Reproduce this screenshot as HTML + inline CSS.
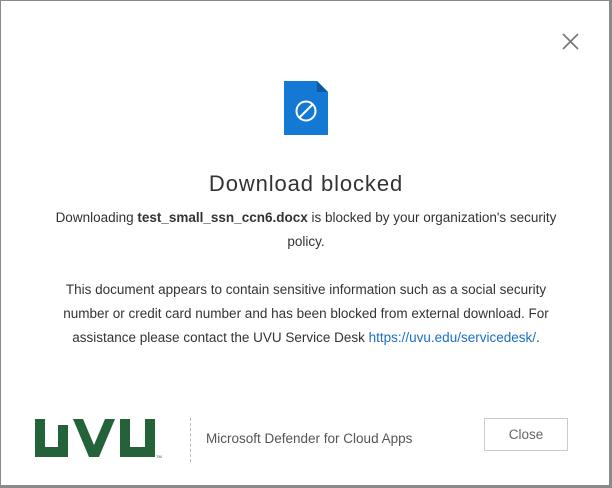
<!DOCTYPE html>
<html><head><style>
html,body{margin:0;padding:0;background:#fff;}
body{width:612px;height:488px;position:relative;overflow:hidden;font-family:"Liberation Sans",sans-serif;color:#333;}
.frame{position:absolute;left:0;top:0;width:608px;height:484px;border:2px solid #8a8a8a;border-left-width:1px;border-top-width:1px;border-right-width:3px;border-bottom-width:3px;}
.line{position:absolute;left:0;width:612px;text-align:center;white-space:nowrap;font-size:13.5px;}
a{color:#1a6fc9;text-decoration:none;}
</style></head><body>
<div class="frame"></div>
<svg style="position:absolute;left:562px;top:33px" width="17" height="17" viewBox="0 0 17 17"><path d="M1 1L16 16M16 1L1 16" stroke="#777" stroke-width="1.6"/></svg>
<svg style="position:absolute;left:284px;top:81px" width="44" height="54" viewBox="0 0 44 54">
<path d="M0 0H33L44 11V54H0Z" fill="#1479d4"/>
<path d="M33 0L44 11H33Z" fill="#0b5aa3"/>
<circle cx="22" cy="30" r="9.5" fill="none" stroke="#fff" stroke-width="2"/>
<path d="M15.5 36.5L28.5 23.5" stroke="#fff" stroke-width="2"/>
</svg>
<div class="line" style="top:171px;font-size:22px;letter-spacing:0.9px;">Download blocked</div>
<div class="line" style="top:210px;">Downloading <b>test_small_ssn_ccn6.docx</b> is blocked by your organization's security</div>
<div class="line" style="top:234px;">policy.</div>
<div class="line" style="top:282px;">This document appears to contain sensitive information such as a social security</div>
<div class="line" style="top:306px;">number or credit card number and has been blocked from external download. For</div>
<div class="line" style="top:330px;">assistance please contact the UVU Service Desk <a>https://uvu.edu/servicedesk/</a>.</div>
<svg style="position:absolute;left:35px;top:419px" width="130" height="42" viewBox="0 0 130 42">
<g fill="#24623a">
<path d="M0 0H10V28H23V6H33V38H0Z"/>
<path d="M38 0H48L59 26L70 0H80L64 38H54Z"/>
<path d="M85 0H95V28H110V0H120V38H85Z"/>
</g>
<text x="121" y="39" font-size="4" fill="#24623a">TM</text>
</svg>
<div style="position:absolute;left:190px;top:418px;height:44px;border-left:1px dashed #bbb;"></div>
<div style="position:absolute;left:206px;top:431px;font-size:13.5px;color:#555;white-space:nowrap;">Microsoft Defender for Cloud Apps</div>
<div style="position:absolute;left:484px;top:418px;width:82px;height:31px;border:1px solid #ccc;text-align:center;line-height:31px;font-size:13.5px;color:#666;">Close</div>
</body></html>
